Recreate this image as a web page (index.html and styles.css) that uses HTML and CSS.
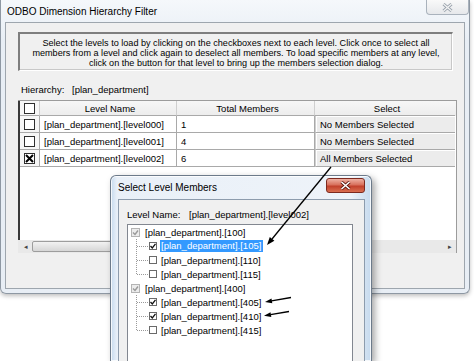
FILE: index.html
```html
<!DOCTYPE html>
<html lang="en">
<head>
  <meta charset="UTF-8" />
  <meta name="viewport" content="width=device-width, initial-scale=1.0"/>
  <title>ODBO Dimension Hierarchy Filter</title>
  <link rel="stylesheet" href="styles.css">
</head>
<body>

  <div class="window">
    <div class="titlebar">
      <span class="title">ODBO Dimension Hierarchy Filter</span>
      <span class="close-btn">
        <svg width="11" height="9" viewBox="0 0 11 9">
          <path d="M1.5 1 L9.5 8 M9.5 1 L1.5 8" stroke="#9aa3ad" stroke-width="3" fill="none"/>
          <path d="M1.5 1 L9.5 8 M9.5 1 L1.5 8" stroke="#f4f4f4" stroke-width="1.2" fill="none"/>
        </svg>
      </span>
    </div>

    <div class="client">
      <div class="hint">
        Select the levels to load by clicking on the checkboxes next to each level. Click once to select all<br>
        members from a level and click again to deselect all members. To load specific members at any level,<br>
        click on the button for that level to bring up the members selection dialog.
      </div>

      <div class="hierarchy">
        <span class="hierarchy-label">Hierarchy:</span>
        <span>[plan_department]</span>
      </div>

      <div class="grid">
        <div class="grid-body">
          <div class="grid-row grid-head">
            <div class="cell cell-check"><span class="cb"></span></div>
            <div class="cell">Level Name</div>
            <div class="cell">Total Members</div>
            <div class="cell">Select</div>
          </div>
          <div class="grid-row">
            <div class="cell cell-check"><span class="cb"></span></div>
            <div class="cell">[plan_department].[level000]</div>
            <div class="cell">1</div>
            <div class="cell cell-btn">No Members Selected</div>
          </div>
          <div class="grid-row">
            <div class="cell cell-check"><span class="cb"></span></div>
            <div class="cell">[plan_department].[level001]</div>
            <div class="cell">4</div>
            <div class="cell cell-btn">No Members Selected</div>
          </div>
          <div class="grid-row">
            <div class="cell cell-check">
              <span class="cb">
                <svg width="9" height="9" viewBox="0 0 9 9"><path d="M1 1 L8 8 M8 1 L1 8" stroke="#000" stroke-width="2"/></svg>
              </span>
            </div>
            <div class="cell">[plan_department].[level002]</div>
            <div class="cell">6</div>
            <div class="cell cell-btn">All Members Selected</div>
          </div>
        </div>
        <div class="hscroll">
          <span class="scroll-arrow">&#9666;</span>
          <span class="scroll-thumb"></span>
          <span class="scroll-arrow">&#9656;</span>
        </div>
      </div>
    </div>
  </div>

  <div class="dialog">
    <div class="dialog-titlebar">
      <span class="title">Select Level Members</span>
      <span class="dialog-close">
        <svg width="11" height="9" viewBox="0 0 11 9">
          <path d="M1.5 1 L9.5 8 M9.5 1 L1.5 8" stroke="#5a1a12" stroke-width="3.2" fill="none"/>
          <path d="M1.5 1 L9.5 8 M9.5 1 L1.5 8" stroke="#fff" stroke-width="1.6" fill="none"/>
        </svg>
      </span>
    </div>
    <div class="dialog-client">
      <div class="level-row">
        <span class="level-label">Level Name:</span>
        <span>[plan_department].[level002]</span>
      </div>
      <div class="tree">
        <div class="node">
          <span class="tcb tcb-gray"><svg width="7" height="7" viewBox="0 0 7 7"><path d="M1 3.5 L3 5.5 L6 1.5" stroke="#9a9a9a" stroke-width="1.4" fill="none"/></svg></span>
          <span>[plan_department].[100]</span>
        </div>
        <div class="node child">
          <span class="twig"></span>
          <span class="tcb"><svg width="6" height="6" viewBox="0 0 6 6"><path d="M0.5 3 L2.3 5 L5.5 0.8" stroke="#111" stroke-width="1.3" fill="none"/></svg></span>
          <span class="selected">[plan_department].[105]</span>
        </div>
        <div class="node child">
          <span class="twig"></span>
          <span class="tcb"></span>
          <span>[plan_department].[110]</span>
        </div>
        <div class="node child">
          <span class="twig last"></span>
          <span class="tcb"></span>
          <span>[plan_department].[115]</span>
        </div>
        <div class="node">
          <span class="tcb tcb-gray"><svg width="7" height="7" viewBox="0 0 7 7"><path d="M1 3.5 L3 5.5 L6 1.5" stroke="#9a9a9a" stroke-width="1.4" fill="none"/></svg></span>
          <span>[plan_department].[400]</span>
        </div>
        <div class="node child">
          <span class="twig"></span>
          <span class="tcb"><svg width="6" height="6" viewBox="0 0 6 6"><path d="M0.5 3 L2.3 5 L5.5 0.8" stroke="#111" stroke-width="1.3" fill="none"/></svg></span>
          <span>[plan_department].[405]</span>
        </div>
        <div class="node child">
          <span class="twig"></span>
          <span class="tcb"><svg width="6" height="6" viewBox="0 0 6 6"><path d="M0.5 3 L2.3 5 L5.5 0.8" stroke="#111" stroke-width="1.3" fill="none"/></svg></span>
          <span>[plan_department].[410]</span>
        </div>
        <div class="node child">
          <span class="twig last"></span>
          <span class="tcb"></span>
          <span>[plan_department].[415]</span>
        </div>
      </div>
    </div>
  </div>

  <!-- callout arrows drawn over both windows -->
  <svg class="arrows" width="474" height="361" viewBox="0 0 474 361">
    <line x1="331" y1="167" x2="272" y2="239" stroke="#000" stroke-width="1.3"/>
    <polygon points="267,245 274.4,240.7 269.8,236.9" fill="#000"/>
    <line x1="291" y1="297.5" x2="271.5" y2="300.8" stroke="#000" stroke-width="1.3"/>
    <polygon points="265,302 272.3,303.3 271.5,298.4" fill="#000"/>
    <line x1="289" y1="311.5" x2="270.5" y2="314.6" stroke="#000" stroke-width="1.3"/>
    <polygon points="264,315.8 271.3,317.1 270.5,312.2" fill="#000"/>
  </svg>

</body>
</html>
```

FILE: styles.css
```css
:root {
  --face: #f0f0f0;
  --grid-line: #a9a9a9;
  --frame: #e8eef5;
  --frame-border: #8e98a3;
}

body {
  margin: 0;
  width: 474px;
  height: 361px;
  overflow: hidden;
  background: #fff;
  font-family: "Liberation Sans", Arial, sans-serif;
  font-size: 9.5px;
  color: #000;
  position: relative;
}

/* main window */

.window {
  width: 470px;
  height: 294px;
  box-sizing: border-box;
  background: linear-gradient(to bottom, #f5f8fb, var(--frame) 40px);
  border: 1px solid var(--frame-border);
  border-top: none;
  border-radius: 0 0 6px 6px;
  box-shadow: 0 2px 4px rgba(0, 0, 0, 0.25);
}

.titlebar {
  height: 22px;
  display: flex;
  justify-content: space-between;
  align-items: flex-start;
  padding-left: 6px;
}

.title {
  font-size: 10px;
  line-height: 12px;
  margin-top: 6px;
}

.close-btn {
  width: 43px;
  height: 15px;
  box-sizing: border-box;
  border: 1px solid #a9b2bc;
  border-top: none;
  border-radius: 0 0 4px 4px;
  background: linear-gradient(to bottom, #f9f9f9, #e6e8eb);
  display: flex;
  align-items: center;
  justify-content: center;
}

.client {
  height: 267px;
  box-sizing: border-box;
  margin: 0 4px 0 4px;
  border: 1px solid #9ea6ae;
  background: var(--face);
  padding: 9px 7px 0 12px;
}

.hint {
  width: 435px;
  height: 39px;
  box-sizing: border-box;
  border: 1px solid #fff;
  border-top: 2px solid #7e7e7e;
  border-left: 2px solid #7e7e7e;
  box-shadow: inset -1px -1px 0 #c8c8c8;
  text-align: center;
  font-size: 9.1px;
  line-height: 10px;
  padding-top: 4px;
  white-space: nowrap;
}

.hierarchy {
  margin-top: 12px;
  height: 14px;
  line-height: 14px;
  margin-bottom: 3px;
  padding-left: 3px;
  display: flex;
}

.hierarchy-label {
  width: 51px;
}

/* level grid */

.grid {
  height: 153px;
  box-sizing: border-box;
  border-top: 1px solid #9c9c9c;
  border-right: 1px solid #9c9c9c;
  background: #fff;
  display: flex;
  flex-direction: column;
}

.grid-body {
  flex: 1;
  border-left: 2px solid #3a3a3a;
}

.grid-row {
  display: grid;
  grid-template-columns: 20px 137px 138px 140px;
  height: 17px;
}

.grid-head {
  height: 15px;
  background: linear-gradient(to bottom, #f7f7f7, #ececec);
}

.grid-head .cell {
  justify-content: center;
  border-right-color: #cfcfcf;
}

.cell {
  box-sizing: border-box;
  border-right: 1px solid var(--grid-line);
  border-bottom: 1px solid var(--grid-line);
  display: flex;
  align-items: center;
  padding-left: 4px;
  white-space: nowrap;
}

.cell:last-child {
  border-right: none;
}

.cell-check {
  padding-left: 0;
  justify-content: center;
  background: #f6f6f6;
}

.cell-btn {
  background: #ececec;
  box-shadow: inset 1px 1px 0 #fff;
  border-left: 1px solid #cfcfcf;
}

.cb {
  width: 11px;
  height: 11px;
  box-sizing: border-box;
  border: 1px solid #2e2e2e;
  background: #fff;
  display: flex;
  align-items: center;
  justify-content: center;
}

.hscroll {
  height: 13px;
  background: #e9e9e9;
  display: flex;
  align-items: center;
  padding-left: 2px;
}

.scroll-arrow {
  width: 12px;
  font-size: 7px;
  color: #444;
  text-align: center;
}

.scroll-thumb {
  width: 310px;
  height: 11px;
  box-sizing: border-box;
  border: 1px solid #9d9d9d;
  border-radius: 2px;
  background: linear-gradient(to bottom, #f2f2f2, #d6d6d6);
  margin-right: auto;
}

/* member selection dialog */

.dialog {
  position: absolute;
  left: 110px;
  top: 175px;
  width: 262px;
  height: 186px;
  box-sizing: border-box;
  border: 1px solid #6c7a8a;
  border-bottom: none;
  border-radius: 6px 6px 0 0;
  background: linear-gradient(to right, #c6daee, #e9f0f8 6px, #eef3f9 240px, #c6daee);
  box-shadow: 3px 3px 7px rgba(0, 0, 0, 0.35), inset 0 0 0 1px rgba(255, 255, 255, 0.8);
  padding: 0 6px 0 7px;
  overflow: hidden;
}

.dialog-titlebar {
  height: 23px;
  display: flex;
  justify-content: space-between;
  align-items: flex-start;
}

.dialog-titlebar .title {
  margin-top: 6px;
}

.dialog-close {
  width: 39px;
  height: 15px;
  margin-top: 2px;
  box-sizing: border-box;
  border: 1px solid #7d2a1f;
  border-radius: 3px;
  background: linear-gradient(to bottom, #eeb0a2, #d8705c 45%, #c2412c 55%, #d96e50);
  display: flex;
  align-items: center;
  justify-content: center;
}

.dialog-client {
  height: 170px;
  box-sizing: border-box;
  border: 1px solid #8d9cad;
  background: var(--face);
  padding: 8px 11px 0 8px;
}

.level-row {
  height: 14px;
  line-height: 14px;
  display: flex;
}

.level-label {
  width: 62px;
}

.tree {
  margin-top: 2px;
  height: 160px;
  border: 1px solid #828790;
  background: #fff;
}

.node {
  height: 14px;
  display: flex;
  align-items: center;
  padding-left: 3px;
  white-space: nowrap;
}

.node.child {
  padding-left: 0;
}

.tcb {
  width: 8px;
  height: 8px;
  box-sizing: border-box;
  border: 1px solid #6a6a6a;
  background: #fff;
  margin-right: 4px;
  display: flex;
  align-items: center;
  justify-content: center;
}

.child .tcb {
  margin-left: 1px;
}

.tcb-gray {
  width: 9px;
  height: 9px;
  border-color: #b4b4b4;
  background: #ececec;
  margin-right: 5px;
}

.twig {
  width: 12px;
  height: 14px;
  margin-left: 8px;
  background:
    repeating-linear-gradient(to right, #9a9a9a 0 1px, transparent 1px 2px) 1px 7px / 11px 1px no-repeat,
    repeating-linear-gradient(to bottom, #9a9a9a 0 1px, transparent 1px 2px) 0 0 / 1px 100% no-repeat;
}

.twig.last {
  background-size: 11px 1px, 1px 8px;
}

.selected {
  background: #3399ff;
  color: #fff;
  padding: 0 2px 0 1px;
  margin-left: -1px;
  line-height: 12px;
}

.arrows {
  position: absolute;
  left: 0;
  top: 0;
  pointer-events: none;
}
```
